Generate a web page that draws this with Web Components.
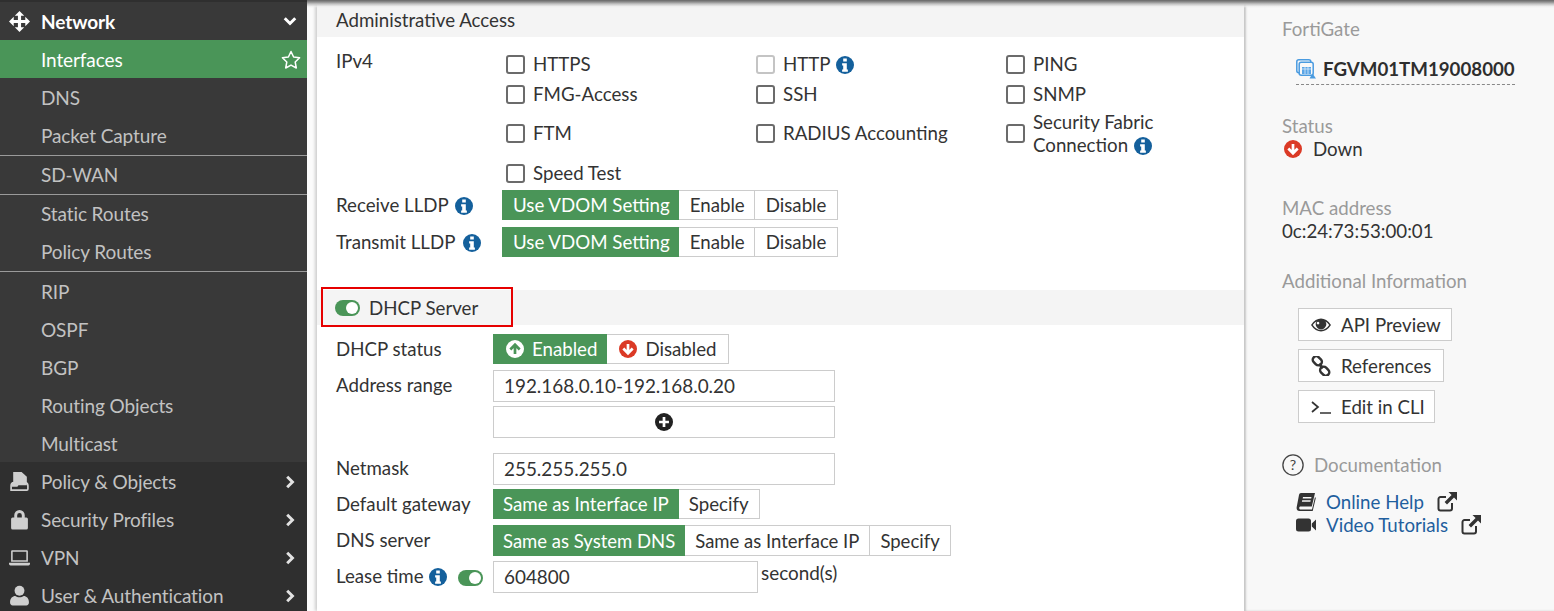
<!DOCTYPE html>
<html lang="en"><head><meta charset="utf-8"><title>FortiGate</title>
<style>
html,body{margin:0;height:611px;overflow:hidden;background:#fff}
body{font:18.7px/22px Lato,"Open Sans",sans-serif;color:#333}
</style></head><body>
<fg-app>
  <fg-sidebar slot="nav">
    <fg-nav kind="head" icon="move" chev="down">Network</fg-nav>
    <fg-nav kind="active" star>Interfaces</fg-nav>
    <fg-nav>DNS</fg-nav>
    <fg-nav line="40" capture>Packet Capture</fg-nav>
    <fg-nav line="39" tight>SD-WAN</fg-nav>
    <fg-nav tight>Static Routes</fg-nav>
    <fg-nav line="39" tight>Policy Routes</fg-nav>
    <fg-nav>RIP</fg-nav>
    <fg-nav>OSPF</fg-nav>
    <fg-nav>BGP</fg-nav>
    <fg-nav>Routing Objects</fg-nav>
    <fg-nav>Multicast</fg-nav>
    <fg-nav kind="top" icon="policy" chev="right">Policy &amp; Objects</fg-nav>
    <fg-nav kind="top" icon="lock" chev="right">Security Profiles</fg-nav>
    <fg-nav kind="top" icon="laptop" chev="right">VPN</fg-nav>
    <fg-nav kind="top" icon="user" chev="right">User &amp; Authentication</fg-nav>
  </fg-sidebar>

  <fg-main slot="main">
    <fg-head style="height:35px">Administrative Access</fg-head>
    <fg-row label="IPv4" lh="22" style="margin-top:13px">
      <fg-checks>
        <fg-check>HTTPS</fg-check>
        <fg-check disabled>HTTP <fg-icon name="info" color="#14609c" style="margin-left:1px"></fg-icon></fg-check>
        <fg-check>PING</fg-check>
        <fg-check>FMG-Access</fg-check>
        <fg-check>SSH</fg-check>
        <fg-check>SNMP</fg-check>
        <fg-check>FTM</fg-check>
        <fg-check>RADIUS Accounting</fg-check>
        <fg-check drop>Security Fabric<br>Connection <fg-icon name="info" color="#14609c" style="margin-left:1px"></fg-icon></fg-check>
        <fg-check>Speed Test</fg-check>
      </fg-checks>
    </fg-row>
    <fg-row style="margin-top:1px">
      <span slot="label">Receive LLDP <fg-icon name="info" color="#14609c" style="margin-left:2px"></fg-icon></span>
      <fg-seg pad="11"><b style="padding-right:9px">Use VDOM Setting</b><i style="padding:0 9px 0 11px">Enable</i><i style="padding:0 11px">Disable</i></fg-seg>
    </fg-row>
    <fg-row style="margin-top:7px">
      <span slot="label">Transmit LLDP <fg-icon name="info" color="#14609c" style="margin-left:3px"></fg-icon></span>
      <fg-seg pad="11"><b style="padding-right:9px">Use VDOM Setting</b><i style="padding:0 9px 0 11px">Enable</i><i style="padding:0 11px">Disable</i></fg-seg>
    </fg-row>

    <fg-head style="height:35px;margin-top:33px" toggle outlined>DHCP Server</fg-head>

    <fg-row label="DHCP status" x="493" style="margin-top:9px">
      <fg-seg pad="10"><b><fg-icon name="up" color="#fff" hole="#4a9558" style="margin:0 8px 0 3px"></fg-icon>Enabled</b><i style="padding-right:11px"><fg-icon name="down" color="#db3a26" style="margin:0 8px 0 2px"></fg-icon>Disabled</i></fg-seg>
    </fg-row>
    <fg-row label="Address range" x="493" style="margin-top:6px"><fg-input w="342" big>192.168.0.10-192.168.0.20</fg-input></fg-row>
    <fg-row x="493" style="margin-top:4px"><fg-input w="342" center><fg-icon name="plus" color="#222"></fg-icon></fg-input></fg-row>
    <fg-row label="Netmask" x="493" style="margin-top:15px"><fg-input w="342" big>255.255.255.0</fg-input></fg-row>
    <fg-row label="Default gateway" x="493" style="margin-top:4px">
      <fg-seg pad="10"><b>Same as Interface IP</b><i>Specify</i></fg-seg>
    </fg-row>
    <fg-row label="DNS server" x="493" style="margin-top:6px">
      <fg-seg pad="10" h="31" style="font-size:18.5px"><b>Same as System DNS</b><i>Same as Interface IP</i><i>Specify</i></fg-seg>
    </fg-row>
    <fg-row x="493" style="margin-top:5px">
      <span slot="label">Lease time <fg-icon name="info" color="#14609c" style="margin-left:1px"></fg-icon> <fg-toggle style="margin-left:6px"></fg-toggle></span>
      <fg-input w="265" big>604800</fg-input><span style="margin:1px 0 0 3px;font-size:18.9px">second(s)</span>
    </fg-row>
  </fg-main>

  <fg-panel slot="panel">
    <fg-ph>FortiGate</fg-ph>
    <fg-device>FGVM01TM19008000</fg-device>
    <fg-ph style="margin-top:30px">Status</fg-ph>
    <fg-pv><fg-icon name="down" color="#db3a26" style="margin:0 11px 0 2px"></fg-icon>Down</fg-pv>
    <fg-ph style="margin-top:37px">MAC address</fg-ph>
    <fg-pv>0c:24:73:53:00:01</fg-pv>
    <fg-ph style="margin-top:28px">Additional Information</fg-ph>
    <fg-btn icon="eye" style="margin-top:16px;padding-right:10px">API Preview</fg-btn>
    <fg-btn icon="link" style="margin-top:8px;padding-right:12px">References</fg-btn>
    <fg-btn icon="term" style="margin-top:8px">Edit in CLI</fg-btn>
    <fg-ph style="margin-top:31px"><fg-icon name="help" color="#444" style="margin-right:10px;width:22px;height:22px"></fg-icon>Documentation</fg-ph>
    <fg-doc icon="book" style="margin-top:14px">Online Help</fg-doc>
    <fg-doc icon="video" style="margin-top:0">Video Tutorials</fg-doc>
  </fg-panel>
</fg-app>

<script>
const ICONS={
 move:'<path fill="currentColor" d="M10 0l4.500 4.500h-3v4h4v-3L20 10l-4.500 4.500v-3h-4v4h3L10 20l-4.500-4.500h3v-4h-4v3L0 10l4.500-4.500v3h4v-4h-3z"/>',
 chevdown:'<path fill="none" stroke="currentColor" stroke-width="4.200" d="M2.500 6L10 13.500 17.500 6"/>',
 chevright:'<path fill="none" stroke="currentColor" stroke-width="4.200" d="M6 2.500L13.500 10 6 17.500"/>',
 star:'<path fill="none" stroke="currentColor" stroke-width="1.500" stroke-linejoin="round" d="M10 1.500l2.600 5.500 6 .8-4.400 4.200 1.100 6L10 15.100 4.700 18l1.100-6L1.400 7.800l6-.8z"/>',
 policy:'<path fill="currentColor" d="M4 1h8l5 4.500V12H4z"/><path fill="none" stroke="currentColor" stroke-width="1.600" d="M2 18.200V14a3 3 0 0 1 3-3h10a3 3 0 0 1 3 3v3.200a1 1 0 0 1-1 1H3z"/><path fill="currentColor" d="M3 10.500h14v3H9l-1 1.500H2.500z"/>',
 lock:'<path fill="currentColor" d="M5 8V6a5 5 0 0 1 10 0v2h1.500A1.500 1.500 0 0 1 18 9.500V18a1.500 1.500 0 0 1-1.500 1.500h-13A1.500 1.500 0 0 1 2 18V9.500A1.500 1.500 0 0 1 3.500 8zm2.800 0h4.400V6a2.200 2.200 0 0 0-4.400 0z"/>',
 laptop:'<path fill="currentColor" d="M3 3h14a1 1 0 0 1 1 1v10H2V4a1 1 0 0 1 1-1zm.500 1.500v8h13v-8zM0 15h20v1a1.500 1.500 0 0 1-1.500 1.500h-17A1.500 1.500 0 0 1 0 16z"/>',
 user:'<circle cx="10" cy="5.500" r="4.700" fill="currentColor"/><path fill="currentColor" d="M1 16.500c0-4 2.500-6 5-6 1 .7 2.500 1.200 4 1.200s3-.5 4-1.200c2.500 0 5 2 5 6 0 2-1 3-2.500 3h-13C2 19.500 1 18.500 1 16.500z"/>',
 info:'<circle cx="10" cy="10" r="10" fill="currentColor"/><path fill="#fff" d="M8 2.800h4v3.400H8zM6.800 8h5.200v7h1.200v2.500H6.800V15H8v-4.500H6.800z"/>',
 up:'<circle cx="10" cy="10" r="10" fill="currentColor"/><path fill="none" stroke="var(--hole,#fff)" stroke-width="3" d="M4.800 10.500L10 5.300l5.200 5.200M10 6v9.500"/>',
 down:'<circle cx="10" cy="10" r="10" fill="currentColor"/><path fill="none" stroke="var(--hole,#fff)" stroke-width="3" d="M4.800 9.500L10 14.700l5.200-5.200M10 14V4.500"/>',
 plus:'<circle cx="10" cy="10" r="10" fill="currentColor"/><path fill="#fff" d="M8.500 4.500h3v4h4v3h-4v4h-3v-4h-4v-3h4z"/>',
 eye:'<path fill="currentColor" fill-rule="evenodd" d="M0 10C3 5.500 6.500 3.500 10 3.500S17 5.500 20 10c-3 4.500-6.500 6.500-10 6.500S3 14.500 0 10zm1.800 0c2.400 3.200 5.200 5 8.200 5s5.800-1.800 8.200-5c-1-1.400-2.300-2.600-3.700-3.400a5.200 5.200 0 1 1-9 0C3.900 7.400 2.800 8.600 1.800 10z"/><path fill="#fff" d="M7 6.800a1.300 1.300 0 1 0 .1 0z"/>',
 link:'<g fill="none" stroke="currentColor" stroke-width="2.500"><rect x="1.300" y="1.300" width="10" height="7" rx="3.500" transform="rotate(45 6.300 4.800)"/><rect x="8.700" y="11.700" width="10" height="7" rx="3.500" transform="rotate(45 13.700 15.200)"/><path d="M8 8l4 4"/></g>',
 term:'<path fill="none" stroke="currentColor" stroke-width="1.700" d="M1 5l6 5-6 5M9 16h11"/>',
 help:'<circle cx="10" cy="10" r="9.200" fill="none" stroke="currentColor" stroke-width="1.200"/><text x="10" y="14.600" font-size="13" font-family="Lato,sans-serif" text-anchor="middle" fill="currentColor">?</text>',
 book:'<path fill="currentColor" fill-rule="evenodd" d="M5 1h14l-3.200 13.500H4a1.800 1.800 0 0 0 0 3h12L19 5l.8 1L16.700 19H3.500C1 19 .2 16.800.8 14.500L3 3c.2-1.200 1-2 2-2zM7 5l-.3 1.500h8.500L15.500 5zM6.200 8.200l-.3 1.500h8.500l.3-1.500z"/>',
 video:'<path fill="currentColor" d="M2.500 3.500h10A2.500 2.500 0 0 1 15 6v8a2.500 2.500 0 0 1-2.500 2.500h-10A2.500 2.500 0 0 1 0 14V6a2.500 2.500 0 0 1 2.500-2.500zM15.800 8.500L20 4.500v11l-4.200-4z"/>',
 ext:'<path fill="none" stroke="currentColor" stroke-width="2" d="M15 11v5.500a2 2 0 0 1-2 2H3.500a2 2 0 0 1-2-2V7a2 2 0 0 1 2-2H9"/><path fill="currentColor" d="M11.500 0H20v8.500l-3-3-7 7-2.400-2.400 7-7z"/>'
};
const svg=(n)=>`<svg viewBox="0 0 20 20" width="100%" height="100%" style="display:block" aria-hidden="true">${ICONS[n]}</svg>`;
function def(name,css,html,init){
  customElements.define(name,class extends HTMLElement{
    constructor(){super();this.attachShadow({mode:'open'});}
    connectedCallback(){
      this.shadowRoot.innerHTML=`<style>${css}</style>`+(typeof html==='function'?html(this):html);
      if(init)init(this);
    }
  });
}
def('fg-icon',':host{display:inline-block;width:18px;height:18px;vertical-align:-3px}',
  h=>{ if(h.getAttribute('color'))h.style.color=h.getAttribute('color');
       if(h.getAttribute('hole'))h.style.setProperty('--hole',h.getAttribute('hole'));
       return svg(h.getAttribute('name'));});
def('fg-app',`:host{display:grid;grid-template-columns:307px 937px 1fr;height:611px;overflow:hidden;background:#fbfbfb;position:relative}
  .shade{position:absolute;left:307px;right:0;top:0;height:8px;background:linear-gradient(#666,#8e8e8e 25%,#c4c4c4 50%,rgba(235,235,235,.7) 80%,rgba(255,255,255,0));pointer-events:none}`,
  '<slot name="nav"></slot><slot name="main"></slot><slot name="panel"></slot><div class="shade"></div>');
def('fg-sidebar',':host{display:flex;flex-direction:column;background:#2f2f2f;padding-top:2px;height:609px;overflow:hidden}',
  '<slot></slot>');
def('fg-nav',`:host{display:flex;align-items:center;flex:none;box-sizing:border-box;height:38px;padding:2px 0 0 41px;color:#c2c2c2;background:#393939;position:relative;font-size:19px;letter-spacing:-.1px}
  :host([tight]){padding-top:0}
  :host([kind=top]){background:#2f2f2f}
  :host([kind=head]){color:#fff;font-weight:700}
  :host([kind=active]){background:#4a9558;color:#fff}
  :host([line]){box-shadow:inset 0 -1px 0 #9a9a9a;padding-bottom:1px}
  :host([capture]){padding-bottom:3px}
  .i{position:absolute;left:9px;top:9px;width:21px;height:21px;color:#cfcfcf}
  :host([kind=head]) .i{color:#fff}
  .c{position:absolute;right:10px;top:13px;width:14px;height:14px;color:#e2e2e2}
  :host([kind=head]) .c{color:#fff;top:12px}
  .s{position:absolute;right:6px;top:10px;width:20px;height:20px;color:#fff}`,
  h=>{let o='';const a=h.getAttribute('icon'),c=h.getAttribute('chev');
    if(h.getAttribute('line'))h.style.height=h.getAttribute('line')+'px';
    if(a)o+=`<span class="i">${svg(a)}</span>`;
    o+='<slot></slot>';
    if(c)o+=`<span class="c">${svg('chev'+c)}</span>`;
    if(h.hasAttribute('star'))o+=`<span class="s">${svg('star')}</span>`;
    return o;});
def('fg-main',':host{display:flex;flex-direction:column;margin:2px 0 0 10px;background:#fff;overflow:hidden;position:relative;box-shadow:-2px 0 3px rgba(0,0,0,.18)}','<slot></slot>');
def('fg-head',`:host{display:flex;align-items:center;flex:none;background:#f4f4f4;padding-left:19px;position:relative}
  :host([toggle]){padding-left:18px}
  .o{position:absolute;left:4px;top:-3px;width:188px;height:36px;border:2px solid #e60000}`,
  h=>(h.hasAttribute('toggle')?'<fg-toggle style="margin-right:9px"></fg-toggle>':'')+'<slot></slot>'+(h.hasAttribute('outlined')?'<span class="o"></span>':''));
def('fg-toggle',`:host{display:inline-block;width:25px;height:16px;border-radius:8px;background:#4a9558;position:relative;vertical-align:-3px}
  i{position:absolute;right:2px;top:2px;width:12px;height:12px;border-radius:50%;background:#fff}`,'<i></i>');
def('fg-row',`:host{display:flex;flex:none;padding-left:19px;align-items:flex-start}
  .l{flex:none;width:var(--lw);line-height:var(--lh,30px);white-space:nowrap}
  .c{display:flex;align-items:flex-start;flex:1}`,
  h=>{const x=+(h.getAttribute('x')||502);h.style.setProperty('--lw',(x-336)+'px');
    if(h.getAttribute('lh'))h.style.setProperty('--lh',h.getAttribute('lh')+'px');
    const l=h.getAttribute('label');
    return `<div class="l"><slot name="label">${l||''}</slot></div><div class="c"><slot></slot></div>`;});
def('fg-checks',`:host{display:grid;grid-template-columns:250px 250px 250px;grid-template-rows:30px 30px 48px 32px;margin-top:-1px;margin-left:4px;align-items:center}`,'<slot></slot>');
def('fg-check',`:host{display:flex;align-items:center;line-height:23px}
  .b{flex:none;width:15px;height:15px;border:2px solid #6b6b6b;border-radius:3px;margin-right:8px;background:#fff}
  :host([disabled]) .b{border-color:#c4c4c4}
  :host([drop]) .t{padding-top:2px}`,'<span class="b"></span><span class="t"><slot></slot></span>');
def('fg-seg',`:host{display:inline-flex;height:var(--h,30px);white-space:nowrap}
  ::slotted(b){display:flex;align-items:center;padding:0 var(--p);background:#4a9558;color:#fff;font-weight:400}
  ::slotted(i){display:flex;align-items:center;padding:0 var(--p);background:#fff;font-style:normal;border:1px solid #ccc;border-left:0;box-sizing:border-box}`,
  '<slot></slot>',h=>{h.style.setProperty('--p',(h.getAttribute('pad')||10)+'px');
    if(h.getAttribute('h'))h.style.setProperty('--h',h.getAttribute('h')+'px');});
def('fg-input',`:host{display:flex;align-items:center;box-sizing:border-box;height:32px;border:1px solid #ccc;padding:0 10px;background:#fff;flex:none}
  :host([big]){font-size:18.9px}
  :host([center]){justify-content:center}`,'<slot></slot>',h=>{h.style.width=h.getAttribute('w')+'px';});
def('fg-panel',':host{display:flex;flex-direction:column;align-items:flex-start;padding:16px 0 0 38px;margin-top:2px;background:#f8f8f8;box-shadow:inset 2px 0 2px #c9c9c9}','<slot></slot>');
def('fg-ph',':host{display:flex;align-items:center;color:#9a9a9a;height:22px}','<slot></slot>');
def('fg-pv',':host{display:flex;align-items:center;height:23px}','<slot></slot>');
def('fg-device',`:host{display:flex;align-items:center;margin:13px 0 0 14px;height:31px;border-bottom:1px dashed #888;font-weight:700;color:#2e2e2e}
  svg{margin-right:7px;flex:none}`,
  `<svg width="20" height="20" viewBox="0 0 20 20" aria-hidden="true"><g fill="#f8f8f8" stroke="#4a9be0" stroke-width="1.500"><rect x=".8" y=".8" width="14" height="13" rx="2"/><rect x="3.200" y="3.300" width="14" height="13" rx="2"/></g><rect x="6" y="8" width="9" height="7" fill="#5aa5e6"/><path d="M6 10h9M9 8v7M12 8v7" stroke="#dcecfa" stroke-width=".8"/><path d="M13.500 19.500l3-5 3.500 5z" fill="#4a9be0"/></svg><slot></slot>`);
def('fg-btn',`:host{display:inline-flex;align-items:center;height:33px;box-sizing:border-box;border:1px solid #ccc;background:#fff;margin-left:16px;padding:0 9px 0 12px}
  span{width:20px;height:20px;margin-right:10px;color:#333}`,
  h=>`<span>${svg(h.getAttribute('icon'))}</span><slot></slot>`);
def('fg-doc',`:host{display:flex;align-items:center;margin-left:14px;height:23px;color:#1f5f9e}
  span{width:20px;height:20px;color:#333;flex:none}
  .a{margin-right:10px}.b{margin-left:13px}`,
  h=>`<span class="a">${svg(h.getAttribute('icon'))}</span><slot></slot><span class="b">${svg('ext')}</span>`);
</script>
</body></html>
